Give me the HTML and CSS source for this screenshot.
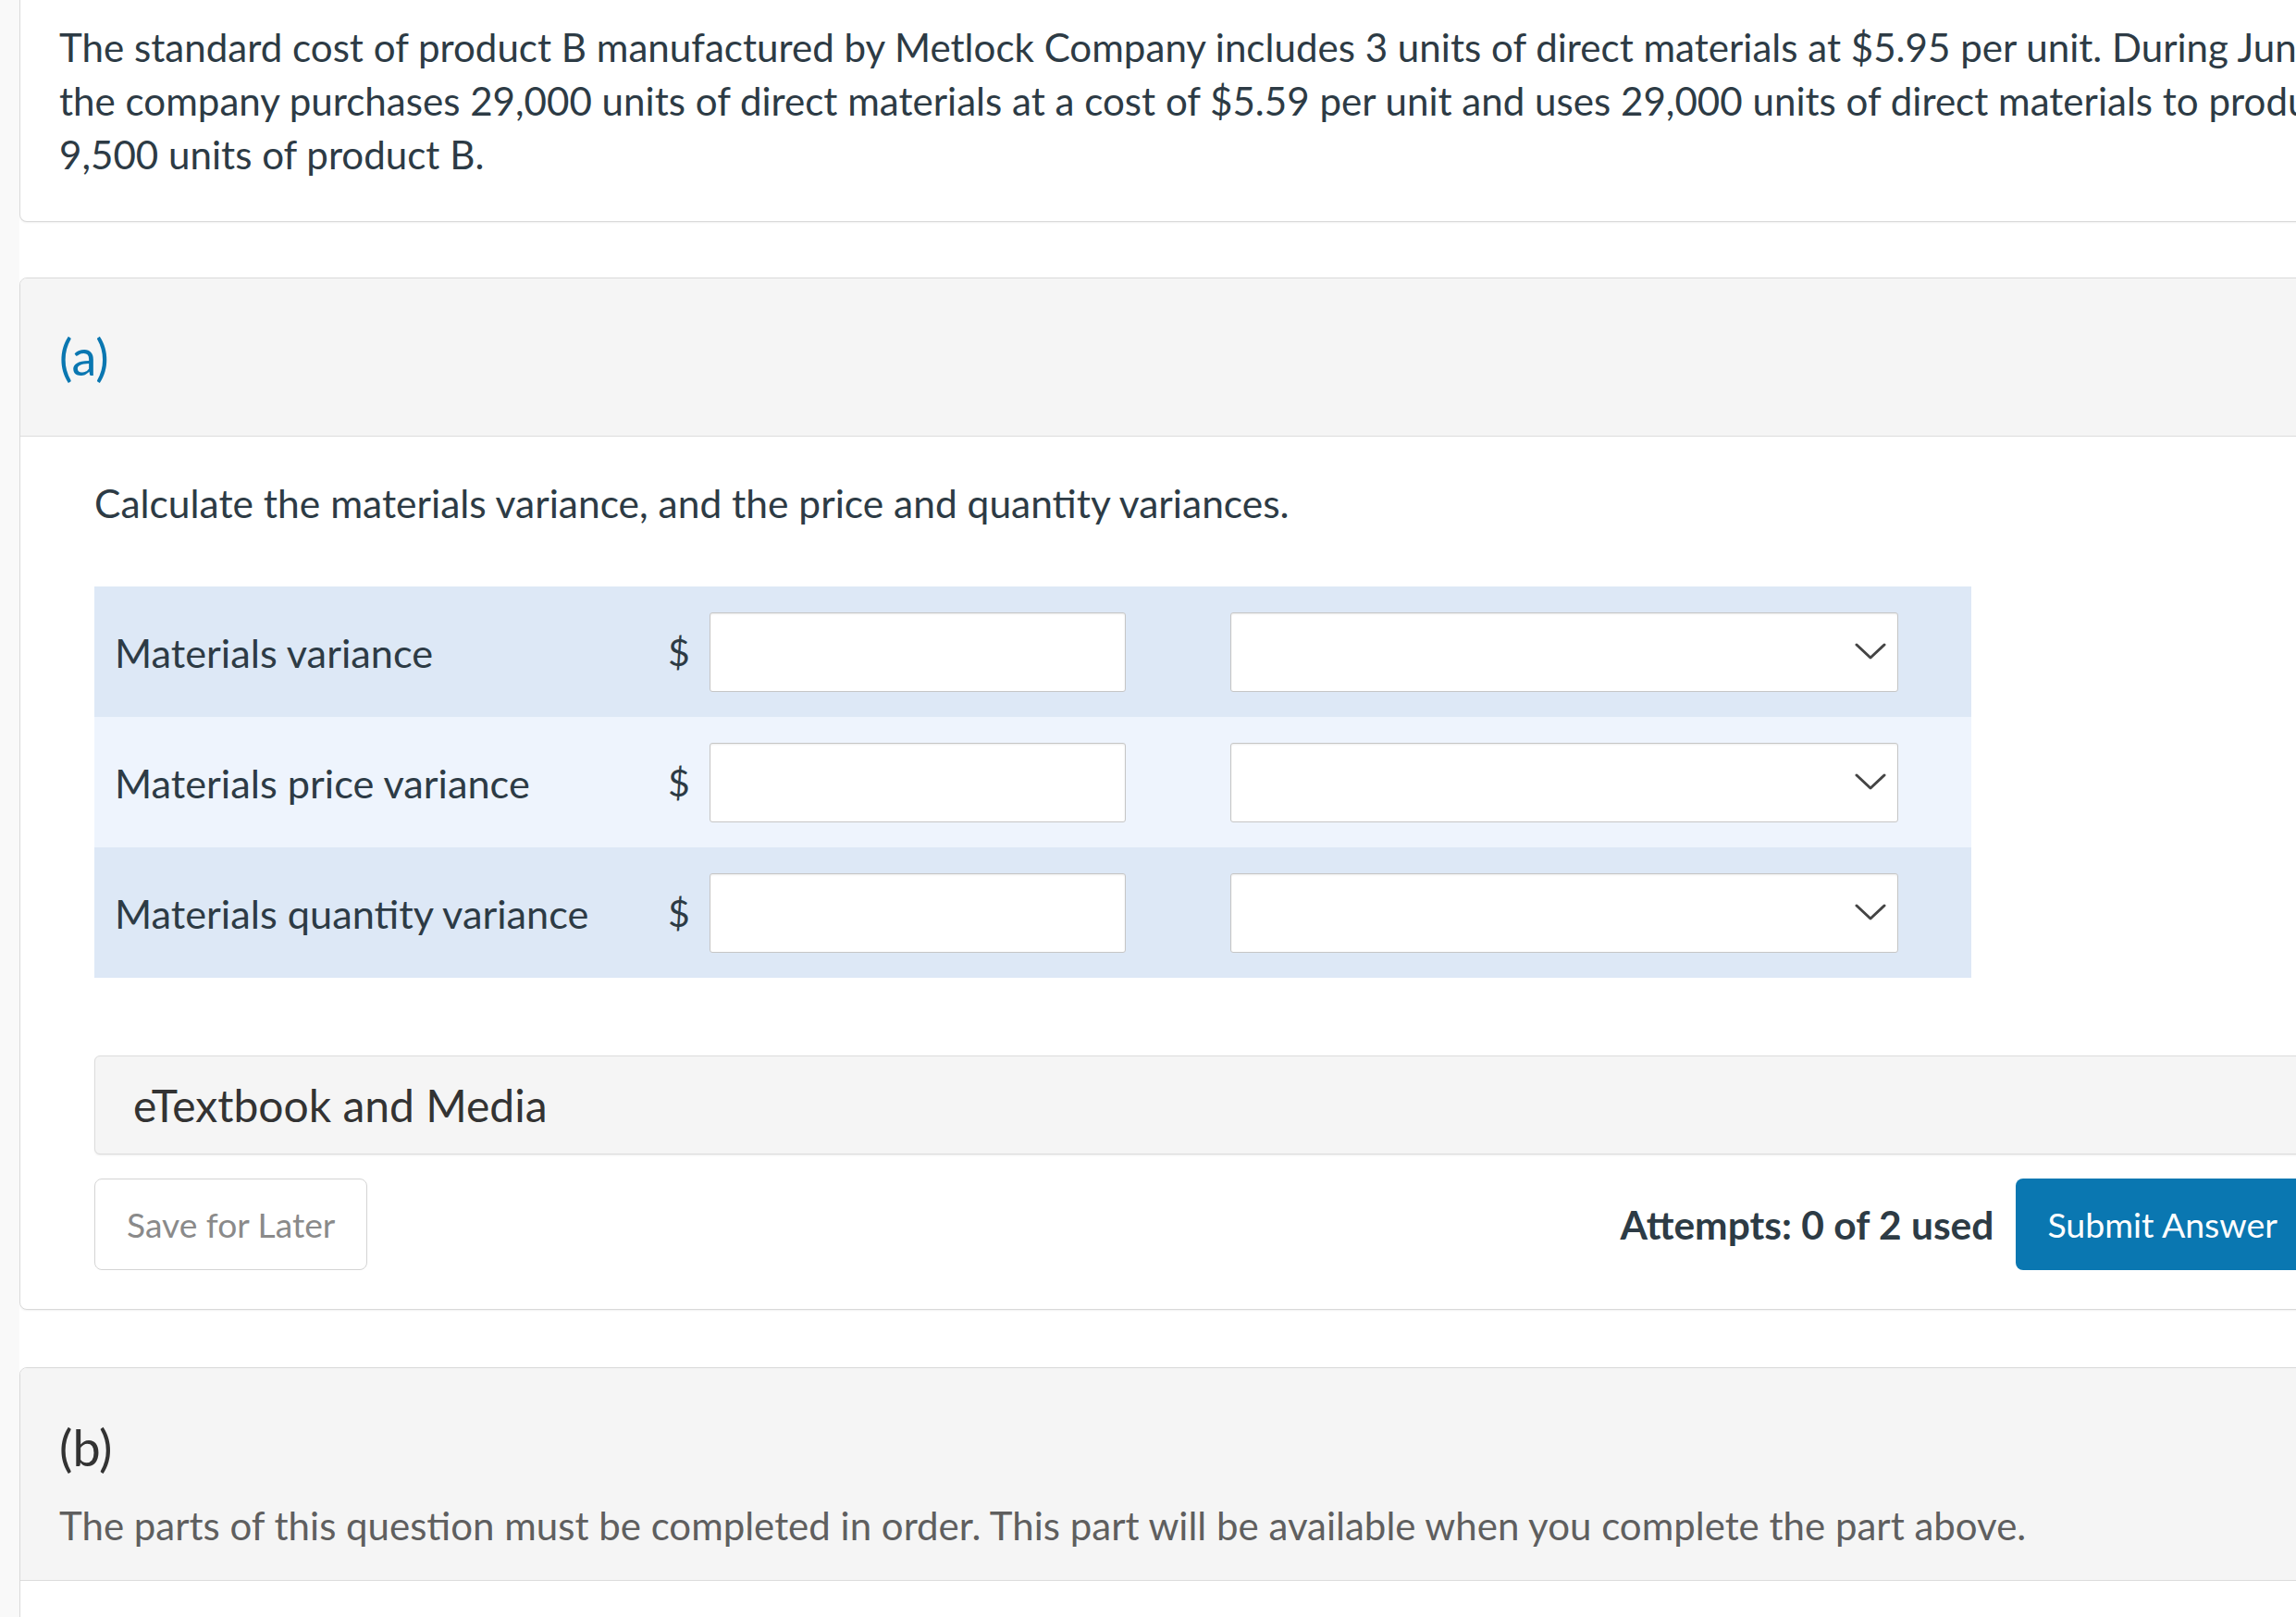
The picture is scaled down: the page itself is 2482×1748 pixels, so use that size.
FILE: index.html
```html
<!DOCTYPE html>
<html lang="en">
<head>
<meta charset="utf-8">
<title>Materials variance</title>
<link rel="stylesheet" href="styles.css">
</head>
<body>
<div class="page">
  <section class="card intro">
    <p class="stem">The standard cost of product B manufactured by Metlock Company includes 3 units of direct materials at $5.95 per unit. During June,<br>the company purchases 29,000 units of direct materials at a cost of $5.59 per unit and uses 29,000 units of direct materials to produce<br>9,500 units of product B.</p>
  </section>

  <section class="card part">
    <header class="part-head">
      <h2 class="part-label active">(a)</h2>
    </header>
    <div class="part-body">
      <p class="prompt">Calculate the materials variance, and the price and quantity variances.</p>
      <div class="answer-table">
        <div class="row shade">
          <span class="label">Materials variance</span>
          <span class="dollar">$</span>
          <input class="amount" type="text" aria-label="Materials variance">
          <div class="select"><svg class="chev" viewBox="0 0 34 19" width="34" height="19"><polyline points="2,2 17,16 32,2"/></svg></div>
        </div>
        <div class="row light">
          <span class="label">Materials price variance</span>
          <span class="dollar">$</span>
          <input class="amount" type="text" aria-label="Materials price variance">
          <div class="select"><svg class="chev" viewBox="0 0 34 19" width="34" height="19"><polyline points="2,2 17,16 32,2"/></svg></div>
        </div>
        <div class="row shade">
          <span class="label">Materials quantity variance</span>
          <span class="dollar">$</span>
          <input class="amount" type="text" aria-label="Materials quantity variance">
          <div class="select"><svg class="chev" viewBox="0 0 34 19" width="34" height="19"><polyline points="2,2 17,16 32,2"/></svg></div>
        </div>
      </div>
      <div class="media">eTextbook and Media</div>
      <div class="actions">
        <button class="save" type="button">Save for Later</button>
        <span class="attempts">Attempts: 0 of 2 used</span>
        <button class="submit" type="button">Submit Answer</button>
      </div>
    </div>
  </section>

  <section class="card part locked">
    <header class="part-head locked-head">
      <h2 class="part-label">(b)</h2>
      <p class="locked-note">The parts of this question must be completed in order. This part will be available when you complete the part above.</p>
    </header>
  </section>
</div>
</body>
</html>
```

FILE: styles.css
```css
html, body {
  margin: 0;
  padding: 0;
  overflow: hidden;
}
body {
  background: #f9f9f9;
  font-family: Lato, "Open Sans", sans-serif;
  color: #2d3b45;
  height: 1748px;
}
.page {
  margin-left: 21px;
  width: 2556px;
  background: #ffffff;
  height: 1748px;
  overflow: hidden;
}
.card {
  background: #ffffff;
  border: 1px solid #d9d9d9;
  border-radius: 8px;
  box-shadow: 0 1px 2px rgba(0, 0, 0, 0.06);
}
.intro {
  border-top: none;
  border-top-left-radius: 0;
  border-top-right-radius: 0;
  padding: 22px 80px 43px 42px;
}
.stem {
  margin: 0;
  font-size: 42.1px;
  line-height: 58px;
  white-space: nowrap;
}
.part {
  margin-top: 60px;
  overflow: hidden;
}
.part-head {
  background: #f5f5f5;
  border-bottom: 1px solid #dcdcdc;
  padding: 54px 42px 54px 42px;
}
.part-label {
  margin: 0;
  font-size: 54px;
  font-weight: 400;
  line-height: 62px;
  color: #333333;
}
.part-label.active {
  color: #0a77b1;
}
.part-body {
  padding: 43px 80px 42px 80px;
}
.prompt {
  margin: 0;
  font-size: 42.5px;
  line-height: 58px;
}
.answer-table {
  margin-top: 61px;
  width: 2029px;
}
.row {
  display: flex;
  align-items: center;
  height: 141px;
  padding-left: 22px;
}
.row.shade {
  background: #dde8f6;
}
.row.light {
  background: #eef4fd;
}
.label {
  width: 598px;
  font-size: 43.3px;
}
.dollar {
  width: 45px;
  font-size: 41px;
}
.amount {
  box-sizing: border-box;
  width: 450px;
  height: 86px;
  border: 1px solid #c6c6c6;
  border-radius: 3px;
  background: #ffffff;
  box-shadow: inset 0 1px 2px rgba(0, 0, 0, 0.08);
  margin: 0;
  font-family: inherit;
  font-size: 36px;
}
.select {
  box-sizing: border-box;
  margin-left: 113px;
  width: 722px;
  height: 86px;
  border: 1px solid #c6c6c6;
  border-radius: 3px;
  background: #ffffff;
  box-shadow: inset 0 1px 2px rgba(0, 0, 0, 0.08);
  display: flex;
  align-items: center;
  justify-content: flex-end;
  padding-right: 12px;
}
.chev polyline {
  fill: none;
  stroke: #444444;
  stroke-width: 3;
  stroke-linecap: round;
  stroke-linejoin: round;
}
.media {
  margin-top: 84px;
  box-sizing: border-box;
  height: 107px;
  background: #f5f5f5;
  border: 1px solid #dcdcdc;
  border-radius: 6px;
  box-shadow: 0 1px 2px rgba(0, 0, 0, 0.08);
  padding-left: 41px;
  display: flex;
  align-items: center;
  font-size: 48px;
  color: #333333;
}
.actions {
  margin-top: 26px;
  display: flex;
  align-items: center;
}
.save {
  box-sizing: border-box;
  height: 99px;
  padding: 0 34px;
  background: #ffffff;
  border: 1px solid #d4d4d4;
  border-radius: 8px;
  font-family: inherit;
  font-size: 37.2px;
  color: #8a8a8a;
}
.attempts {
  margin-left: auto;
  margin-right: 24px;
  font-size: 42.5px;
  font-weight: 700;
  color: #2d3b45;
}
.submit {
  box-sizing: border-box;
  height: 99px;
  padding: 0 34px;
  background: #0a77b1;
  border: none;
  border-radius: 8px;
  font-family: inherit;
  font-size: 37.5px;
  color: #ffffff;
}
.locked {
  margin-top: 62px;
  min-height: 400px;
}
.locked-head {
  padding: 55px 42px 31px 42px;
}
.locked-note {
  margin: 25px 0 0 0;
  font-size: 42px;
  line-height: 56px;
  color: #5f5f5f;
  white-space: nowrap;
}
```
